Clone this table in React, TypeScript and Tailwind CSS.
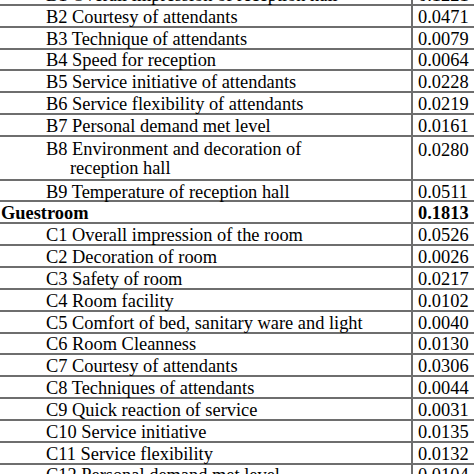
const rows: { label: string; value: string; bold?: boolean; wrap?: string }[] = [
  { label: "B1 Overall impression of reception hall", value: "0.1221" },
  { label: "B2 Courtesy of attendants", value: "0.0471" },
  { label: "B3 Technique of attendants", value: "0.0079" },
  { label: "B4 Speed for reception", value: "0.0064" },
  { label: "B5 Service initiative of attendants", value: "0.0228" },
  { label: "B6 Service flexibility of attendants", value: "0.0219" },
  { label: "B7 Personal demand met level", value: "0.0161" },
  { label: "B8 Environment and decoration of", wrap: "reception hall", value: "0.0280" },
  { label: "B9 Temperature of reception hall", value: "0.0511" },
  { label: "Guestroom", value: "0.1813", bold: true },
  { label: "C1 Overall impression of the room", value: "0.0526" },
  { label: "C2 Decoration of room", value: "0.0026" },
  { label: "C3 Safety of room", value: "0.0217" },
  { label: "C4 Room facility", value: "0.0102" },
  { label: "C5 Comfort of bed, sanitary ware and light", value: "0.0040" },
  { label: "C6 Room Cleanness", value: "0.0130" },
  { label: "C7 Courtesy of attendants", value: "0.0306" },
  { label: "C8 Techniques of attendants", value: "0.0044" },
  { label: "C9 Quick reaction of service", value: "0.0031" },
  { label: "C10 Service initiative", value: "0.0135" },
  { label: "C11 Service flexibility", value: "0.0132" },
  { label: "C12 Personal demand met level", value: "0.0104" },
];

export default function App() {
  return (
    <div className="w-[474px] h-[474px] overflow-hidden bg-white text-black font-['Liberation_Serif','Times_New_Roman',serif] text-[18.4px]">
      <div className="-mt-[16px] w-[520px]">
        {rows.map((r, i) => (
          <div
            key={i}
            className={`flex border-b-2 border-[#6e6e6e] ${r.wrap ? "h-[43.7px]" : "h-[21.85px]"}`}
          >
            <div
              className={`w-[411px] shrink-0 flex flex-col justify-center leading-[19px] pt-[3px] ${
                r.bold ? "font-bold pl-[1px]" : "pl-[46px]"
              }`}
            >
              <span className="whitespace-nowrap">{r.label}</span>
              {r.wrap && <span className="pl-[24px]">{r.wrap}</span>}
            </div>
            <div
              className={`flex-1 border-l-2 border-[#6e6e6e] pl-[5px] leading-[19px] flex ${
                r.wrap ? "items-start pt-[4px]" : "items-center pt-[3px]"
              } ${r.bold ? "font-bold" : ""}`}
            >
              {r.value}
            </div>
          </div>
        ))}
      </div>
    </div>
  );
}
